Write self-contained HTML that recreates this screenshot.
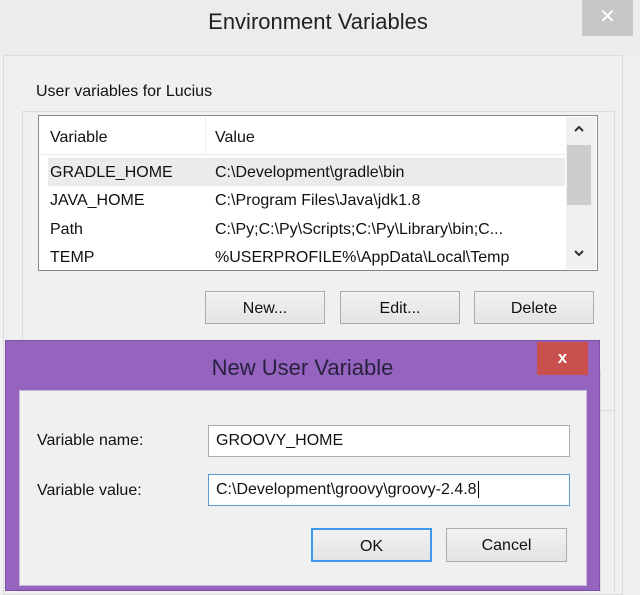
<!DOCTYPE html>
<html><head><style>
*{box-sizing:border-box;margin:0;padding:0}
body{width:640px;height:591px;background:#f0f0f0;position:relative;overflow:hidden;font-family:"Liberation Sans",sans-serif;color:#111}
.a{position:absolute}
.t{font-size:15px;white-space:nowrap}
.btn{position:absolute;border:1px solid #acacac;background:linear-gradient(#f2f2f2,#e3e3e3);font-size:16px;text-align:center;line-height:33px}
</style></head><body>
<div class="a" style="left:0;top:0;width:640px;height:55px;background:#ececec"></div>
<div class="a" style="left:0;top:9px;width:636px;text-align:center;font-size:22px;color:#222">Environment Variables</div>
<div class="a" style="left:582px;top:0;width:51px;height:36px;background:#c7c7c7;color:#fff;font-size:20px;text-align:center;line-height:34px">✕</div>
<div class="a" style="left:3px;top:55px;width:620px;height:540px;border:1px solid #dcdcdc;background:#f0f0f0"></div>
<div class="a" style="left:22px;top:111px;width:593px;height:300px;border:1px solid #dcdcdc"></div>
<div class="a t" style="left:32px;top:83px;background:#f0f0f0;padding:0 4px;font-size:16px">User variables for Lucius</div>
<div class="a" style="left:38px;top:115px;width:560px;height:156px;border:1px solid #828790;background:#fff"></div>
<div class="a" style="left:205px;top:117px;width:1px;height:38px;background:#e5eef7"></div>
<div class="a" style="left:40px;top:154px;width:525px;height:1px;background:#e5eef7"></div>
<div class="a t" style="left:50px;top:129px;font-size:16px">Variable</div>
<div class="a t" style="left:215px;top:129px;font-size:16px">Value</div>
<div class="a" style="left:48px;top:158px;width:517px;height:28px;background:#ebebeb"></div>
<div class="a t" style="left:50px;top:164px;font-size:16px">GRADLE_HOME</div>
<div class="a t" style="left:215px;top:164px;font-size:16px">C:\Development\gradle\bin</div>
<div class="a t" style="left:50px;top:192px;font-size:16px">JAVA_HOME</div>
<div class="a t" style="left:215px;top:192px;font-size:16px">C:\Program Files\Java\jdk1.8</div>
<div class="a t" style="left:50px;top:221px;font-size:16px">Path</div>
<div class="a t" style="left:215px;top:221px;font-size:16px">C:\Py;C:\Py\Scripts;C:\Py\Library\bin;C...</div>
<div class="a t" style="left:50px;top:249px;font-size:16px">TEMP</div>
<div class="a t" style="left:215px;top:249px;font-size:16px">%USERPROFILE%\AppData\Local\Temp</div>
<div class="a" style="left:566px;top:117px;width:30px;height:152px;background:#f0f0f0"></div>
<div class="a" style="left:567px;top:145px;width:24px;height:60px;background:#cdcdcd"></div>
<svg class="a" style="left:573px;top:158px" width="0" height="0"></svg>
<svg class="a" style="left:573px;top:124px" width="12" height="10"><path d="M2 7 L6 3 L10 7" stroke="#333" stroke-width="2" fill="none"/></svg>
<svg class="a" style="left:573px;top:248px" width="12" height="10"><path d="M2 3 L6 7 L10 3" stroke="#333" stroke-width="2" fill="none"/></svg>
<div class="btn" style="left:205px;top:291px;width:120px;height:33px">New...</div>
<div class="btn" style="left:340px;top:291px;width:120px;height:33px">Edit...</div>
<div class="btn" style="left:474px;top:291px;width:120px;height:33px">Delete</div>
<div class="a" style="left:600px;top:370px;width:15px;height:221px;border-left:1px solid #dcdcdc;border-right:1px solid #dcdcdc"></div>

<div class="a" style="left:5px;top:340px;width:595px;height:251px;background:#9464bf;border:1px solid #7e4fa8"></div>
<div class="a" style="left:5px;top:355px;width:595px;text-align:center;font-size:22px;color:#2a2040">New User Variable</div>
<div class="a" style="left:537px;top:342px;width:51px;height:33px;background:#c9504c;color:#fff;font-size:17px;font-weight:bold;text-align:center;line-height:32px">x</div>
<div class="a" style="left:19px;top:390px;width:568px;height:196px;background:#f0f0f0;border:1px solid #c9b7dc"></div>
<div class="a t" style="left:37px;top:432px;font-size:16px">Variable name:</div>
<div class="a t" style="left:37px;top:482px;font-size:16px">Variable value:</div>
<div class="a" style="left:208px;top:425px;width:362px;height:32px;background:#fff;border:1px solid #abadb3"></div>
<div class="a t" style="left:216px;top:432px;font-size:16px">GROOVY_HOME</div>
<div class="a" style="left:208px;top:474px;width:362px;height:32px;background:#fff;border:1px solid #5b9bd5"></div>
<div class="a t" style="left:216px;top:481px;font-size:16px">C:\Development\groovy\groovy-2.4.8<span style="border-left:1px solid #000;margin-left:1px"></span></div>
<div class="btn" style="left:311px;top:528px;width:121px;height:34px;border:2px solid #3c9ae8">OK</div>
<div class="btn" style="left:446px;top:528px;width:121px;height:34px">Cancel</div>
</body></html>
